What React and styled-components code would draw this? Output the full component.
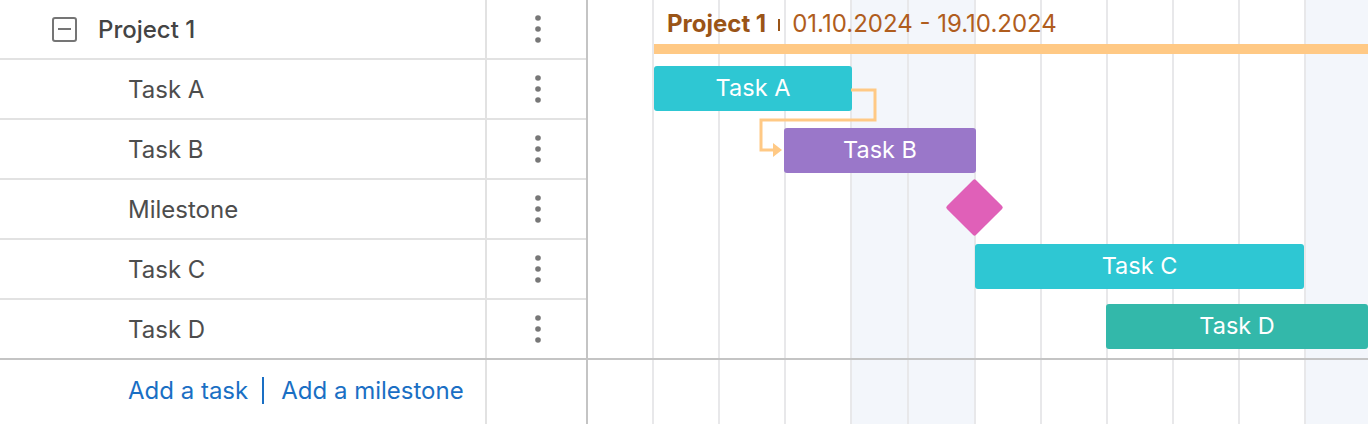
import React from 'react';
import styled, { createGlobalStyle } from 'styled-components';

const GlobalStyle = createGlobalStyle`
  html, body {
    margin: 0;
    padding: 0;
    background: #fff;
    font-family: Inter, "Noto Sans", sans-serif;
  }
  * { box-sizing: border-box; }
`;

const Page = styled.div`
  display: flex;
  width: 1368px;
  height: 424px;
  overflow: hidden;
  background: #fff;
`;

const Grid = styled.div`
  width: 586px;
  display: flex;
  flex-direction: column;
`;

const Row = styled.div`
  display: flex;
  height: 60px;
  border-bottom: 2px solid ${(p) => (p.$last ? '#c4c4c4' : '#e2e2e2')};
`;

const NameCell = styled.div`
  width: 487px;
  display: flex;
  align-items: center;
  gap: 21px;
  padding-left: ${(p) => (p.$level ? 128 : 52)}px;
  border-right: 2px solid #e2e2e2;
  font-size: 24px;
  color: ${(p) => (p.$level ? '#4d4d4d' : '#444')};
  font-weight: ${(p) => (p.$level ? 400 : 500)};
`;

const ActionCell = styled.div`
  flex: 1;
  display: flex;
  align-items: center;
  justify-content: center;
  padding-left: 2px;
`;

const Toggle = styled.span`
  width: 25px;
  height: 25px;
  border: 2px solid #757575;
  border-radius: 3px;
  display: flex;
  align-items: center;
  justify-content: center;

  &::before {
    content: '';
    width: 13px;
    height: 2px;
    background: #757575;
  }
`;

const Footer = styled.div`
  flex: 1;
  display: flex;
`;

const FooterCell = styled.div`
  width: 487px;
  display: flex;
  align-items: center;
  padding-left: 128px;
  padding-bottom: 4px;
  border-right: 2px solid #e2e2e2;
  font-size: 24px;
`;

const AddLink = styled.a`
  color: #1a6fc4;
  text-decoration: none;
  cursor: pointer;
`;

const LinkSep = styled.span`
  width: 2px;
  height: 27px;
  margin: 0 17px 0 14px;
  background: #1a6fc4;
`;

const Chart = styled.div`
  flex: 1;
  position: relative;
  border-left: 2px solid #c4c4c4;
  overflow: hidden;
`;

const Columns = styled.div`
  display: flex;
  height: 100%;
`;

const Column = styled.div`
  flex: none;
  height: 100%;
  border-right: 2px solid #e8e8ea;
  background: ${(p) => (p.$weekend ? '#f3f6fb' : '#fff')};
`;

const Overlay = styled.div`
  position: absolute;
  inset: 0;
`;

const ChartRow = styled.div`
  position: relative;
  height: 60px;
  border-bottom: 2px solid ${(p) => (p.$last ? '#c4c4c4' : 'transparent')};
`;

const ProjectLabel = styled.div`
  position: absolute;
  left: 79px;
  top: 9px;
  display: flex;
  align-items: center;
  font-size: 24px;
  white-space: nowrap;

  b {
    color: #9a5417;
    font-weight: 700;
  }

  span {
    color: #b05d1d;
  }
`;

const LabelSep = styled.i`
  width: 2px;
  height: 12px;
  margin: 3px 12px 0 12px;
  background: #9a5417;
`;

const ProjectBar = styled.div`
  position: absolute;
  top: 44px;
  height: 10px;
  background: #ffc985;
`;

const Bar = styled.div`
  position: absolute;
  height: 45px;
  padding-bottom: 2px;
  border-radius: 3px;
  background: ${(p) => p.$color};
  color: #fff;
  font-size: 23.5px;
  display: flex;
  align-items: center;
  justify-content: center;
  white-space: nowrap;
`;

const Milestone = styled.div`
  position: absolute;
  width: 41px;
  height: 41px;
  border-radius: 2px;
  background: #e060b8;
  transform: rotate(45deg);
`;

const Links = styled.svg`
  position: absolute;
  left: 0;
  top: 0;
  pointer-events: none;
`;

const DotsIcon = () => (
  <svg width="8" height="30" viewBox="0 0 8 30">
    <circle cx="4" cy="4" r="2.8" fill="#777" />
    <circle cx="4" cy="15" r="2.8" fill="#777" />
    <circle cx="4" cy="26" r="2.8" fill="#777" />
  </svg>
);

const columns = [66, 66, 66, 66, 57, 67, 66, 66, 66, 66, 66, 70];
const weekends = [4, 5, 11];

const rows = [
  { name: 'Project 1', level: 0 },
  { name: 'Task A', level: 1, bar: { left: 66, width: 198, top: 6, color: '#2ec7d3' } },
  { name: 'Task B', level: 1, bar: { left: 196, width: 192, top: 8, color: '#9a77c9' } },
  { name: 'Milestone', level: 1, milestone: { x: 386, y: 27 } },
  { name: 'Task C', level: 1, bar: { left: 387, width: 329, top: 4, color: '#2ec7d3' } },
  { name: 'Task D', level: 1, bar: { left: 518, width: 262, top: 4, color: '#33b8aa' } },
];

const App = () => (
  <>
    <GlobalStyle />
    <Page>
      <Grid>
        {rows.map((r, i) => (
          <Row key={r.name} $last={i === rows.length - 1}>
            <NameCell $level={r.level}>
              {r.level === 0 && <Toggle />}
              {r.name}
            </NameCell>
            <ActionCell>
              <DotsIcon />
            </ActionCell>
          </Row>
        ))}
        <Footer>
          <FooterCell>
            <AddLink>Add a task</AddLink>
            <LinkSep />
            <AddLink>Add a milestone</AddLink>
          </FooterCell>
          <ActionCell />
        </Footer>
      </Grid>

      <Chart>
        <Columns>
          {columns.map((w, i) => (
            <Column key={i} $weekend={weekends.includes(i)} style={{ width: w }} />
          ))}
        </Columns>
        <Overlay>
          {rows.map((r, i) => (
            <ChartRow key={r.name} $last={i === rows.length - 1}>
              {r.level === 0 && (
                <>
                  <ProjectLabel>
                    <b>Project 1</b>
                    <LabelSep />
                    <span>01.10.2024 - 19.10.2024</span>
                  </ProjectLabel>
                  <ProjectBar style={{ left: 66, width: 800 }} />
                </>
              )}
              {r.bar && (
                <Bar
                  $color={r.bar.color}
                  style={{ left: r.bar.left, width: r.bar.width, top: r.bar.top }}
                >
                  {r.name}
                </Bar>
              )}
              {r.milestone && (
                <Milestone style={{ left: r.milestone.x - 20.5, top: r.milestone.y - 20.5 }} />
              )}
            </ChartRow>
          ))}
          <Links width="300" height="180">
            <polyline
              points="263,90 287,90 287,120 173,120 173,150 186,150"
              fill="none"
              stroke="#ffc985"
              strokeWidth="3"
            />
            <polygon points="185,143 194,150 185,157" fill="#ffc985" />
          </Links>
        </Overlay>
      </Chart>
    </Page>
  </>
);

export default App;
